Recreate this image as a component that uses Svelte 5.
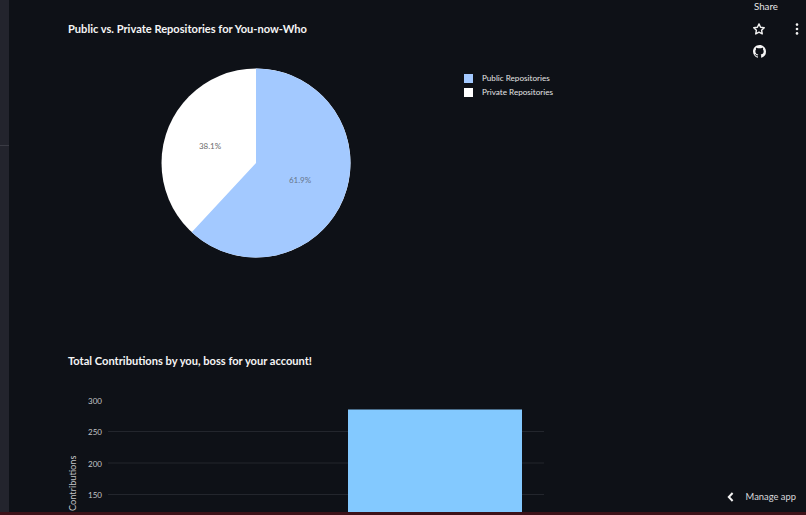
<script>
	const legend = [
		{ label: 'Public Repositories', color: '#a3c9ff' },
		{ label: 'Private Repositories', color: '#ffffff' }
	];
	const ticks = [
		{ label: '300', y: 24, line: false },
		{ label: '250', y: 55.5, line: true },
		{ label: '200', y: 87, line: true },
		{ label: '150', y: 118.5, line: true }
	];
</script>

<div class="page">
	<aside class="rail"><hr /></aside>

	<main class="main">
		<section class="pie-section">
			<h2>Public vs. Private Repositories for You-now-Who</h2>
			<div class="pie-row">
				<svg class="pie" width="380" height="200" viewBox="0 0 380 200">
					<circle cx="188" cy="100" r="94.5" fill="#ffffff" />
					<path d="M188 100 L188 5.5 A94.5 94.5 0 1 1 123.7 169.3 Z" fill="#a3c9ff" />
					<text x="142" y="85.5" class="pct">38.1%</text>
					<text x="232" y="120" class="pct blue">61.9%</text>
				</svg>
				<ul class="legend">
					{#each legend as item}
						<li><span class="swatch" style="background: {item.color}"></span>{item.label}</li>
					{/each}
				</ul>
			</div>
		</section>

		<section class="bar-section">
			<h2>Total Contributions by you, boss for your account!</h2>
			<svg class="bars" width="510" height="139" viewBox="-10 0 510 139">
				{#each ticks as t}
					{#if t.line}
						<line x1="40" x2="476" y1={t.y} y2={t.y} class="grid" />
					{/if}
					<text x="34" y={t.y + 3.5} class="tick">{t.label}</text>
				{/each}
				<rect x="280" y="33.5" width="174" height="105" fill="#83c9ff" />
				<text transform="translate(8 135) rotate(-90)" class="axis">Contributions</text>
			</svg>
		</section>
	</main>

	<header class="toolbar">
		<span class="share">Share</span>
		<div class="icons">
			<svg class="star" width="14" height="14" viewBox="0 0 24 24">
				<path d="M12 3.2l2.7 5.8 6.3.8-4.6 4.3 1.2 6.3L12 17.3l-5.6 3.1 1.2-6.3L3 9.8l6.3-.8z" fill="none" stroke="#f2f2f2" stroke-width="2.4" stroke-linejoin="round" />
			</svg>
			<svg class="kebab" width="4" height="12" viewBox="0 0 4 12">
				<circle cx="2" cy="1.6" r="1.3" fill="#f2f2f2" />
				<circle cx="2" cy="6" r="1.3" fill="#f2f2f2" />
				<circle cx="2" cy="10.4" r="1.3" fill="#f2f2f2" />
			</svg>
		</div>
		<svg class="github" width="13" height="13" viewBox="0 0 16 16">
			<path fill="#f5f5f5" d="M8 0C3.58 0 0 3.58 0 8c0 3.54 2.29 6.53 5.47 7.59.4.07.55-.17.55-.38 0-.19-.01-.82-.01-1.49-2.01.37-2.53-.49-2.69-.94-.09-.23-.48-.94-.82-1.13-.28-.15-.68-.52-.01-.53.63-.01 1.08.58 1.23.82.72 1.21 1.87.87 2.33.66.07-.52.28-.87.51-1.07-1.78-.2-3.64-.89-3.64-3.95 0-.87.31-1.59.82-2.15-.08-.2-.36-1.02.08-2.12 0 0 .67-.21 2.2.82.64-.18 1.32-.27 2-.27s1.36.09 2 .27c1.53-1.04 2.2-.82 2.2-.82.44 1.1.16 1.92.08 2.12.51.56.82 1.27.82 2.15 0 3.07-1.87 3.75-3.65 3.95.29.25.54.73.54 1.48 0 1.07-.01 1.93-.01 2.2 0 .21.15.46.55.38A8.01 8.01 0 0 0 16 8c0-4.42-3.58-8-8-8z" />
		</svg>
	</header>

	<div class="manage">
		<svg width="7" height="10" viewBox="0 0 7 10">
			<path d="M5.6 1 L1.8 5 L5.6 9" fill="none" stroke="#f2f2f2" stroke-width="2" />
		</svg>
		<span>Manage app</span>
	</div>

	<div class="bottom-strip"></div>
</div>

<style>
	:global(body) {
		background: #0e1117;
	}

	.page {
		position: relative;
		display: flex;
		height: 515px;
		overflow: hidden;
		background: #0e1117;
		color: #fafafa;
		font-family: Lato, 'Noto Sans', sans-serif;
	}

	.rail {
		flex: none;
		width: 9px;
		background: #23242d;
		padding-top: 145px;
		box-sizing: border-box;
	}

	.rail hr {
		margin: 0;
		border: 0;
		height: 1px;
		background: #3a3b44;
	}

	.main {
		flex: 1;
		padding-left: 59px;
	}

	h2 {
		margin: 0;
		font-size: 11.1px;
		font-weight: 700;
		line-height: 16px;
		color: #f5f5f5;
	}

	.pie-section {
		height: 353px;
		padding-top: 21px;
		box-sizing: border-box;
	}

	.pie-row {
		display: flex;
		align-items: flex-start;
		margin-top: 26px;
	}

	.pie {
		display: block;
		flex: none;
		margin-right: 16px;
	}

	.pct {
		font-size: 8px;
		fill: #6b6b6b;
		text-anchor: middle;
	}

	.pct.blue {
		fill: #66758c;
	}

	.legend {
		list-style: none;
		margin: 9px 0 0;
		padding: 0;
		font-size: 8.15px;
		line-height: 13.5px;
		color: #e4e4e4;
	}

	.legend li {
		display: flex;
		align-items: center;
	}

	.swatch {
		width: 9px;
		height: 9px;
		margin-right: 9px;
	}

	.bars {
		display: block;
		margin: 7px 0 0 -10px;
	}

	.grid {
		stroke: #23262d;
		stroke-width: 1;
	}

	.tick {
		font-size: 8px;
		fill: #c4c5c8;
		text-anchor: end;
	}

	.axis {
		font-size: 9.2px;
		fill: #c4c5c8;
	}

	.toolbar {
		position: absolute;
		top: 0;
		right: 0;
		width: 52px;
		height: 60px;
		font-size: 9.7px;
		color: #e6e6e6;
	}

	.share {
		position: absolute;
		left: 0;
		top: 0;
		line-height: 13px;
	}

	.icons {
		position: absolute;
		top: 22px;
		left: -2px;
		width: 47px;
		display: flex;
		justify-content: space-between;
		align-items: center;
	}

	.github {
		position: absolute;
		left: -1px;
		top: 45px;
	}

	.manage {
		position: absolute;
		right: 10px;
		top: 490px;
		display: flex;
		align-items: center;
		gap: 12px;
		font-size: 9.4px;
		line-height: 13px;
		color: #d8d8dc;
	}

	.bottom-strip {
		position: absolute;
		left: 0;
		right: 0;
		bottom: 0;
		height: 3px;
		background: #3d1219;
	}
</style>
